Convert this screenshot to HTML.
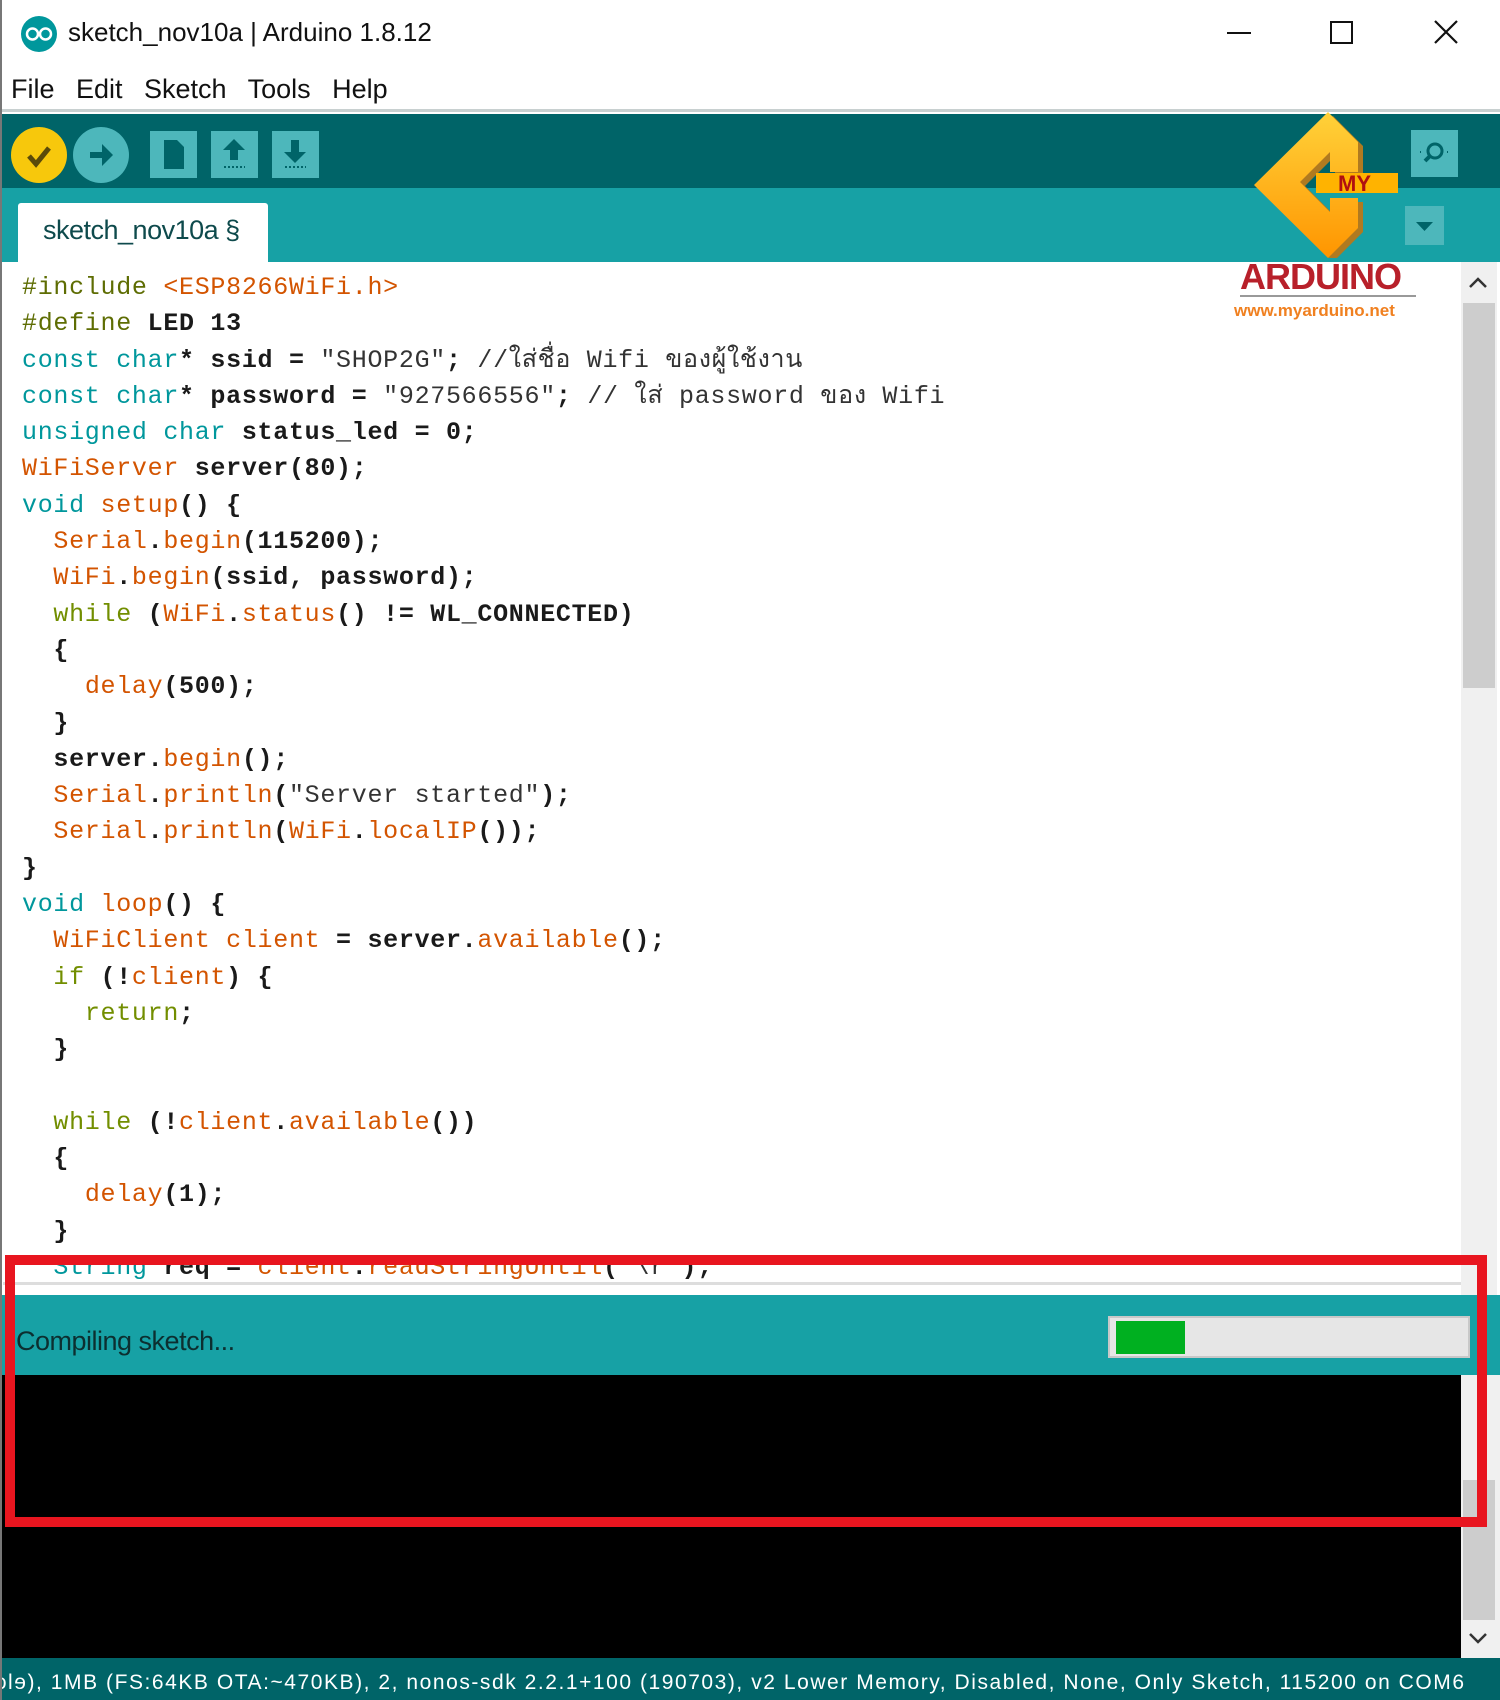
<!DOCTYPE html>
<html><head><meta charset="utf-8"><style>
*{margin:0;padding:0;box-sizing:border-box}
body{width:1500px;height:1700px;overflow:hidden;background:#fff;font-family:"Liberation Sans",sans-serif;position:relative}
.abs{position:absolute}
#title{left:0;top:0;width:1500px;height:64px;background:#fff}
#menu{left:0;top:64px;width:1500px;height:48px;background:#fff;border-bottom:3px solid #c8d0d0}
#tool{left:0;top:114px;width:1500px;height:74px;background:#006468}
#tabs{left:0;top:188px;width:1500px;height:74px;background:#17a1a5}
#editor{left:3px;top:262px;width:1458px;height:1033px;background:#fff;overflow:hidden}
pre{font-family:"Liberation Mono",monospace;font-size:25px;letter-spacing:0.7px;line-height:36.3px;color:#1a1a1a;padding:8px 0 0 19px;font-weight:bold}
.k{color:#00979c;font-weight:normal}.o{color:#d35400;font-weight:normal}.w{color:#728e00;font-weight:normal}.i{color:#5e6d03;font-weight:normal}.c{color:#333;font-weight:normal}
.sq{position:absolute;width:47px;height:47px;background:#4db7bb}
</style></head><body>
<div class="abs" id="title">
 <svg class="abs" style="left:20px;top:15px" width="38" height="38" viewBox="0 0 38 38"><circle cx="19" cy="19" r="18" fill="#00979c"/><circle cx="12.5" cy="19" r="5.5" fill="none" stroke="#fff" stroke-width="2.5"/><circle cx="25.5" cy="19" r="5.5" fill="none" stroke="#fff" stroke-width="2.5"/></svg>
 <div class="abs" style="left:68px;top:17px;font-size:26px;color:#111">sketch_nov10a | Arduino 1.8.12</div>
 <div class="abs" style="left:1227px;top:32px;width:24px;height:2px;background:#111"></div>
 <div class="abs" style="left:1330px;top:21px;width:23px;height:23px;border:2px solid #111"></div>
 <svg class="abs" style="left:1433px;top:19px" width="26" height="26"><path d="M2 2L24 24M24 2L2 24" stroke="#111" stroke-width="2.2"/></svg>
</div>
<div class="abs" id="menu"><div class="abs" style="left:11px;top:10px;font-size:27px;color:#111;word-spacing:14px">File Edit Sketch Tools Help</div></div>
<div class="abs" id="tool">
 <div class="abs" style="left:11px;top:13px;width:56px;height:56px;border-radius:50%;background:#f7c80c"></div>
 <svg class="abs" style="left:11px;top:13px" width="56" height="56"><path d="M18 29l7 8 13-16" fill="none" stroke="#5a4a0a" stroke-width="5"/></svg>
 <div class="abs" style="left:73px;top:13px;width:56px;height:56px;border-radius:50%;background:#4db7bb"></div>
 <svg class="abs" style="left:73px;top:13px" width="56" height="56"><path d="M17 25h12v-8l11 11-11 11v-8H17z" fill="#006468"/></svg>
 <div class="sq" style="left:150px;top:17px"></div><svg class="abs" style="left:150px;top:17px" width="47" height="47"><path d="M14 9h13l7 7v22H14z" fill="#006468"/></svg>
 <div class="sq" style="left:211px;top:17px"></div><svg class="abs" style="left:211px;top:17px" width="47" height="47"><path d="M23 8l11 11h-7v10h-8V19h-7z" fill="#006468"/><path d="M13 36h21" stroke="#006468" stroke-width="2" stroke-dasharray="2 2"/></svg>
 <div class="sq" style="left:272px;top:17px"></div><svg class="abs" style="left:272px;top:17px" width="47" height="47"><path d="M23 32l11-11h-7V9h-8v12h-7z" fill="#006468"/><path d="M13 36h21" stroke="#006468" stroke-width="2" stroke-dasharray="2 2"/></svg>
 <div class="sq" style="left:1411px;top:16px"></div><svg class="abs" style="left:1411px;top:16px" width="47" height="47"><circle cx="24" cy="21" r="7" fill="none" stroke="#006468" stroke-width="3"/><path d="M19 26l-5 5" stroke="#006468" stroke-width="4"/><path d="M9 22h3M36 22h3" stroke="#006468" stroke-width="2" stroke-dasharray="1 2"/></svg>
</div>
<div class="abs" id="tabs">
 <div class="abs" style="left:18px;top:15px;width:250px;height:60px;background:#fff;border-radius:3px 3px 0 0"></div>
 <div class="abs" style="left:43px;top:27px;font-size:27px;color:#0e4a4c;letter-spacing:-0.5px">sketch_nov10a §</div>
 <div class="abs" style="left:1405px;top:18px;width:39px;height:39px;background:#4db7bb"></div>
 <svg class="abs" style="left:1405px;top:18px" width="39" height="39"><path d="M11 16h17l-8.5 9z" fill="#006468"/></svg>
</div>
<div class="abs" id="editor"><pre><span class="i">#include</span> <span class="o">&lt;ESP8266WiFi.h&gt;</span>
<span class="i">#define</span> LED 13
<span class="k">const char</span>* ssid = <span class="c">"SHOP2G"</span>; <span class="c">//ใส่ชื่อ Wifi ของผู้ใช้งาน</span>
<span class="k">const char</span>* password = <span class="c">"927566556"</span>; <span class="c">// ใส่ password ของ Wifi</span>
<span class="k">unsigned char</span> status_led = 0;
<span class="o">WiFiServer</span> server(80);
<span class="k">void</span> <span class="o">setup</span>() {
  <span class="o">Serial</span>.<span class="o">begin</span>(115200);
  <span class="o">WiFi</span>.<span class="o">begin</span>(ssid, password);
  <span class="w">while</span> (<span class="o">WiFi</span>.<span class="o">status</span>() != WL_CONNECTED)
  {
    <span class="o">delay</span>(500);
  }
  server.<span class="o">begin</span>();
  <span class="o">Serial</span>.<span class="o">println</span>(<span class="c">"Server started"</span>);
  <span class="o">Serial</span>.<span class="o">println</span>(<span class="o">WiFi</span>.<span class="o">localIP</span>());
}
<span class="k">void</span> <span class="o">loop</span>() {
  <span class="o">WiFiClient</span> <span class="o">client</span> = server.<span class="o">available</span>();
  <span class="w">if</span> (!<span class="o">client</span>) {
    <span class="w">return</span>;
  }

  <span class="w">while</span> (!<span class="o">client</span>.<span class="o">available</span>())
  {
    <span class="o">delay</span>(1);
  }
  <span class="k">String</span> req = <span class="o">client</span>.<span class="o">readStringUntil</span>(<span class="c">'\r'</span>);
</pre></div>
<div class="abs" style="left:1461px;top:262px;width:36px;height:1033px;background:#f0f0f0"></div>
<div class="abs" style="left:1463px;top:303px;width:32px;height:385px;background:#cdcdcd"></div>
<svg class="abs" style="left:1467px;top:275px" width="22" height="16"><path d="M3 12l8-8 8 8" fill="none" stroke="#333" stroke-width="2.5"/></svg>
<div class="abs" style="left:3px;top:1282px;width:1458px;height:3px;background:#ddd"></div>
<svg class="abs" style="left:1250px;top:108px" width="170" height="150" viewBox="0 0 170 150">
 <defs><linearGradient id="g" x1="0" y1="0" x2="0" y2="1"><stop offset="0" stop-color="#ffd23a"/><stop offset="1" stop-color="#ff9500"/></linearGradient></defs>
 <path d="M78 4l30 30v30h-28V44L50 74l30 30V90h28v30l-30 30-74-73z" fill="#b07a20" transform="translate(5,4)"/>
 <path d="M78 4l30 30v30h-28V44L50 74l30 30V90h28v30l-30 30-74-73z" fill="url(#g)"/>
 <rect x="66" y="65" width="82" height="20" fill="#ffb300"/>
 <text x="88" y="83" font-family="Liberation Sans" font-weight="bold" font-size="22" fill="#b01010">MY</text>
</svg>
<div class="abs" style="left:1240px;top:256px;font-family:'Liberation Sans';font-weight:bold;font-size:36px;color:#b8202a;letter-spacing:-1px">ARDUINO</div>
<div class="abs" style="left:1240px;top:295px;width:176px;height:2px;background:#999"></div>
<div class="abs" style="left:1234px;top:301px;font-weight:bold;font-size:17px;color:#f08020">www.myarduino.net</div>
<div class="abs" style="left:0;top:1295px;width:1500px;height:80px;background:#17a1a5"></div>
<div class="abs" style="left:16px;top:1326px;font-size:27px;color:#0c2f30;letter-spacing:-0.5px">Compiling sketch...</div>
<div class="abs" style="left:1108px;top:1316px;width:362px;height:42px;background:#e6e6e6;border:2px solid #c8c8c8"></div>
<div class="abs" style="left:1116px;top:1321px;width:69px;height:33px;background:#00b020"></div>
<div class="abs" style="left:0;top:1375px;width:1461px;height:283px;background:#000"></div>
<div class="abs" style="left:1461px;top:1375px;width:39px;height:283px;background:#f0f0f0"></div>
<div class="abs" style="left:1463px;top:1480px;width:32px;height:140px;background:#cdcdcd"></div>
<svg class="abs" style="left:1467px;top:1630px" width="22" height="16"><path d="M3 4l8 8 8-8" fill="none" stroke="#333" stroke-width="2.5"/></svg>
<div class="abs" style="left:0;top:1658px;width:1500px;height:42px;background:#006468"></div>
<div class="abs" style="left:-4px;top:1671px;font-size:21px;color:#fff;white-space:nowrap;letter-spacing:1.55px">ɔlɘ), 1MB (FS:64KB OTA:~470KB), 2, nonos-sdk 2.2.1+100 (190703), v2 Lower Memory, Disabled, None, Only Sketch, 115200 on COM6</div>
<div class="abs" style="left:5px;top:1255px;width:1482px;height:272px;border:10px solid #e8151f"></div>
<div class="abs" style="left:0;top:0;width:2px;height:1700px;background:#777"></div>
</body></html>
